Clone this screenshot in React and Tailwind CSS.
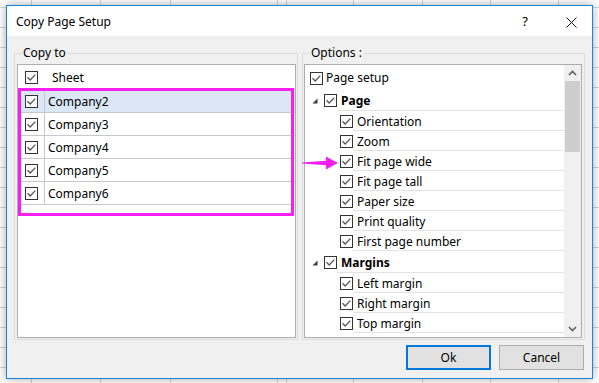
import React from 'react';

const font = { fontFamily: '"Noto Sans", "Open Sans", Arial, sans-serif' };

function Check() {
  return (
    <svg width="13" height="13" viewBox="0 0 13 13" className="shrink-0">
      <rect x="0.5" y="0.5" width="12" height="12" fill="white" stroke="#333" />
      <path d="M2.5 6.3 L5.2 9 L10.3 3.6" fill="none" stroke="#555" strokeWidth="1.3" />
    </svg>
  );
}

function Expander() {
  return (
    <svg width="6" height="6" viewBox="0 0 6 6" className="shrink-0">
      <polygon points="5.5,0.5 5.5,5.5 0.5,5.5" fill="#3c3c3c" />
    </svg>
  );
}

const companies = ['Company2', 'Company3', 'Company4', 'Company5', 'Company6'];

const pageItems = ['Orientation', 'Zoom', 'Fit page wide', 'Fit page tall', 'Paper size', 'Print quality', 'First page number'];
const marginItems = ['Left margin', 'Right margin', 'Top margin'];

function ChildRow({ label }) {
  return (
    <div className="flex h-[20px] items-stretch pl-[35px]">
      <div className="flex items-center pt-[1px]"><Check /></div>
      <div className="flex-1 flex items-center pl-[4px] pt-[2px] border-b border-[#e3e3e3]">{label}</div>
    </div>
  );
}

function ParentRow({ label }) {
  return (
    <div className="flex h-[22px] items-stretch pl-[7px]">
      <div className="flex items-center w-[12px] pt-[2px]"><Expander /></div>
      <div className="flex items-center pt-[1px]"><Check /></div>
      <div className="flex-1 flex items-center pl-[4px] pt-[2px] border-b border-[#e3e3e3] font-bold">{label}</div>
    </div>
  );
}

export default function App() {
  return (
    <div
      className="relative w-[599px] h-[383px] overflow-hidden bg-white pt-[5px] pl-[6px] text-[12px] text-black bg-[repeating-linear-gradient(180deg,transparent_0px,transparent_7px,#d4d4d4_7px,#d4d4d4_8px,transparent_8px,transparent_20px),linear-gradient(90deg,transparent_31px,#d4d4d4_31px,#d4d4d4_32px,transparent_32px,transparent_100px,#d4d4d4_100px,#d4d4d4_101px,transparent_101px,transparent_170px,#d4d4d4_170px,#d4d4d4_171px,transparent_171px,transparent_277px,#d4d4d4_277px,#d4d4d4_278px,transparent_278px,transparent_286px,#d4d4d4_286px,#d4d4d4_287px,transparent_287px,transparent_353px,#d4d4d4_353px,#d4d4d4_354px,transparent_354px,transparent_422px,#d4d4d4_422px,#d4d4d4_423px,transparent_423px,transparent_490px,#d4d4d4_490px,#d4d4d4_491px,transparent_491px,transparent_558px,#d4d4d4_558px,#d4d4d4_559px,transparent_559px)]"
      style={font}
    >
      <div className="w-[587px] h-[374px] border border-[#1883d7] bg-[#f0f0f0] shadow-[0_0_9px_rgba(0,0,0,0.35)] flex flex-col">
        {/* title bar */}
        <div className="h-[30px] bg-white flex items-center pl-[9px] pt-[2px]">
          <span className="flex-1 text-[12px]">Copy Page Setup</span>
          <span className="w-[20px] text-center text-[13px] mr-[26px]">?</span>
          <div className="w-[20px] flex justify-center mr-[11px]">
            <svg width="11" height="11" viewBox="0 0 11 11">
              <path d="M0.5 0.5 L10.5 10.5 M10.5 0.5 L0.5 10.5" stroke="#111" strokeWidth="1" />
            </svg>
          </div>
        </div>

        {/* group boxes */}
        <div className="grid grid-cols-[284px_283px] gap-[4px] px-[7px] mt-[9px]">
          <fieldset className="border border-[#dcdcdc] pl-[2px] pr-[1px] pb-[1px] min-w-0">
            <legend className="ml-[4px] px-[2px] leading-[16px]">Copy to</legend>
            <div className="relative mt-[3px] h-[274px] border border-[#adadad] bg-white">
              <div className="flex h-[25px] items-center border-b border-[#c8c8c8]">
                <div className="w-[27px] flex justify-center pr-[1px]"><Check /></div>
                <span className="pl-[7px] pt-[1px]">Sheet</span>
              </div>
              {companies.map((c, i) => (
                <div key={c} className={`flex h-[23px] border-b border-[#c8c8c8] ${i === 0 ? 'bg-[#dbe6f6]' : ''}`}>
                  <div className="w-[27px] flex items-center justify-center border-r border-[#c8c8c8]"><Check /></div>
                  <span className="flex items-center pl-[3px] pt-[1px]">{c}</span>
                </div>
              ))}
              <div className="absolute left-0 top-[23px] w-[276px] h-[128px] border-[3px] border-[#f520f0]" />
            </div>
          </fieldset>

          <fieldset className="border border-[#dcdcdc] pl-[1px] pr-[2px] pb-[1px] min-w-0">
            <legend className="ml-[5px] px-[2px] leading-[16px]">Options :</legend>
            <div className="mt-[3px] h-[274px] border border-[#adadad] bg-white flex overflow-hidden">
              <div className="flex-1 overflow-hidden">
                <div className="flex h-[24px] items-center pl-[5px] gap-[3px] pt-[2px]">
                  <Check />
                  <span>Page setup</span>
                </div>
                <ParentRow label="Page" />
                {pageItems.map((p) => <ChildRow key={p} label={p} />)}
                <ParentRow label="Margins" />
                {marginItems.map((p) => <ChildRow key={p} label={p} />)}
              </div>
              <div className="w-[17px] bg-[#f0f0f0] flex flex-col items-center">
                <div className="h-[16px] flex items-center justify-center">
                  <svg width="9" height="6" viewBox="0 0 9 6">
                    <path d="M1 5 L4.5 1.5 L8 5" fill="none" stroke="#606060" strokeWidth="1.6" />
                  </svg>
                </div>
                <div className="w-[15px] h-[71px] bg-[#cdcdcd]" />
                <div className="flex-1" />
                <div className="h-[16px] flex items-center justify-center">
                  <svg width="9" height="6" viewBox="0 0 9 6">
                    <path d="M1 1 L4.5 4.5 L8 1" fill="none" stroke="#606060" strokeWidth="1.6" />
                  </svg>
                </div>
              </div>
            </div>
          </fieldset>
        </div>

        {/* buttons */}
        <div className="flex justify-end gap-[8px] pr-[8px] mt-[5px]">
          <button className="w-[85px] h-[25px] border-2 border-[#0078d7] bg-[#e1e1e1] text-[12px]">Ok</button>
          <button className="w-[85px] h-[25px] border border-[#adadad] bg-[#e1e1e1] text-[12px]">Cancel</button>
        </div>
      </div>

      {/* pointer arrow */}
      <svg className="absolute left-[300px] top-[155px]" width="40" height="16" viewBox="0 0 40 16">
        <polygon points="2,7.5 26,5.8 26,1.5 38,8 26,14.5 26,10.2 2,8.5" fill="#f520f0" />
      </svg>
    </div>
  );
}
